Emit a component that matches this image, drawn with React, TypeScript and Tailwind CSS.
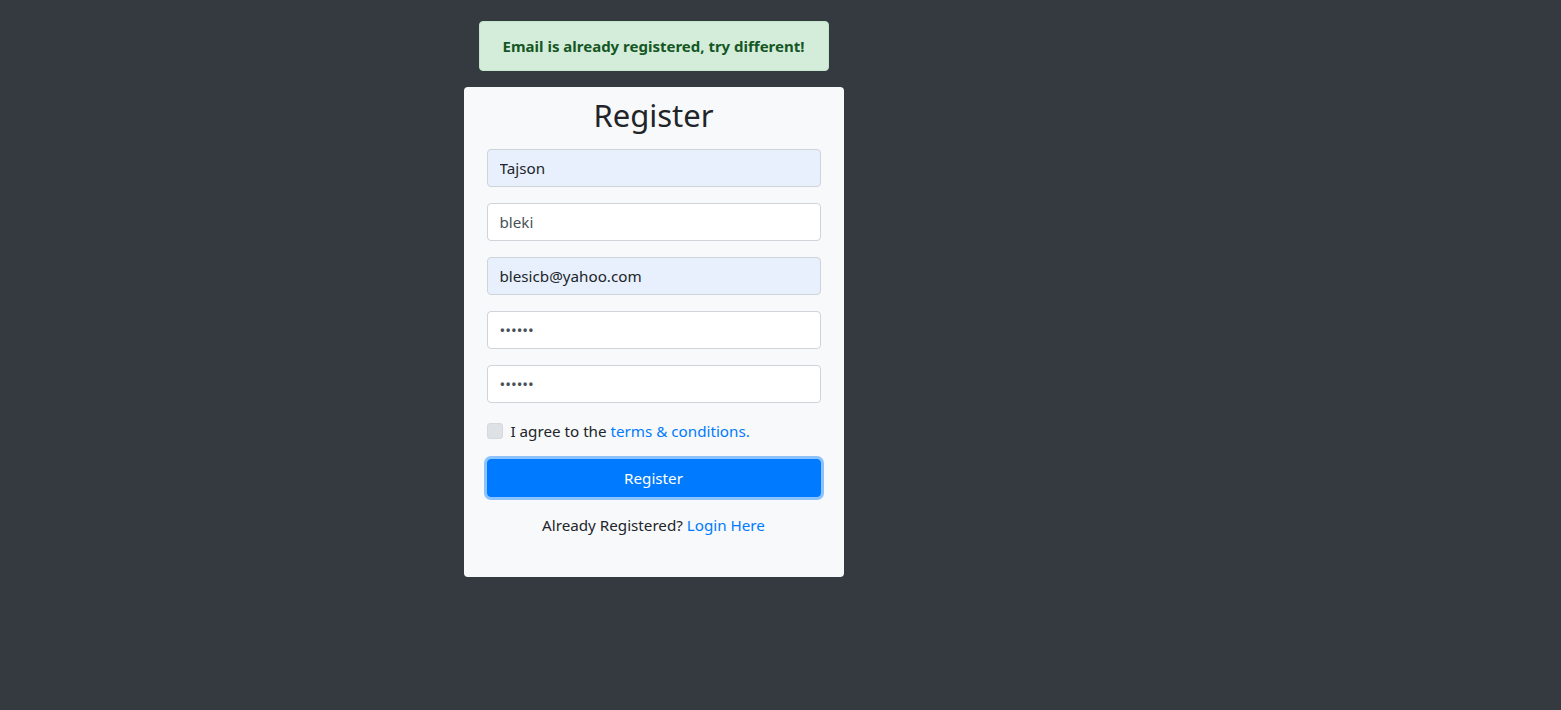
import React from "react";

const inputClass =
  "w-full h-[38px] px-3 rounded-[4px] border border-[#ced4da] text-[15.2px] outline-none";

const App = () => {
  return (
    <main
      className="w-full min-h-[710px] bg-[#343a40] pt-[21px]"
      style={{ fontFamily: '"Noto Sans", "Open Sans", sans-serif' }}
    >
      <div className="w-[1140px] mx-auto">
        <div className="ml-[253px] w-[380px] flex flex-col items-center">
          <div className="w-[350px] h-[50px] bg-[#d4edda] border border-[#c3e6cb] rounded-[4px] flex items-center justify-center">
            <p className="text-[15px] font-bold text-[#155724]">
              Email is already registered, try different!
            </p>
          </div>
          <div className="mt-[16px] w-[380px] bg-[#f8f9fa] rounded-[4px] px-[23px] pt-[7px] pb-[40px] flex flex-col">
            <h1 className="text-center text-[31px] leading-[42px] text-[#212529] font-normal">
              Register
            </h1>
            <form className="mt-[13px] flex flex-col gap-4">
              <input
                className={`${inputClass} bg-[#e8f0fe] text-[#212529]`}
                defaultValue="Tajson"
              />
              <input
                className={`${inputClass} bg-white text-[#495057]`}
                defaultValue="bleki"
              />
              <input
                className={`${inputClass} bg-[#e8f0fe] text-[#212529]`}
                defaultValue="blesicb@yahoo.com"
              />
              <input
                type="password"
                className={`${inputClass} bg-white text-[#495057]`}
                defaultValue="123456"
              />
              <input
                type="password"
                className={`${inputClass} bg-white text-[#495057]`}
                defaultValue="123456"
              />
              <label className="h-6 flex items-center gap-2 text-[15.2px] text-[#212529]">
                <span className="w-4 h-4 rounded-[3px] bg-[#dee2e6] border border-[#d5d9dd]" />
                <span>
                  I agree to the{" "}
                  <a className="text-[#007bff]">terms &amp; conditions.</a>
                </span>
              </label>
              <button
                type="button"
                className="w-full h-[38px] rounded-[4px] bg-[#007bff] text-white text-[15.2px] border border-[#007bff] ring-[3px] ring-[#8cc3ff]"
              >
                Register
              </button>
              <p className="text-center text-[15.2px] leading-6 text-[#212529]">
                Already Registered?{" "}
                <a className="text-[#007bff]">Login Here</a>
              </p>
            </form>
          </div>
        </div>
      </div>
    </main>
  );
};

export default App;
